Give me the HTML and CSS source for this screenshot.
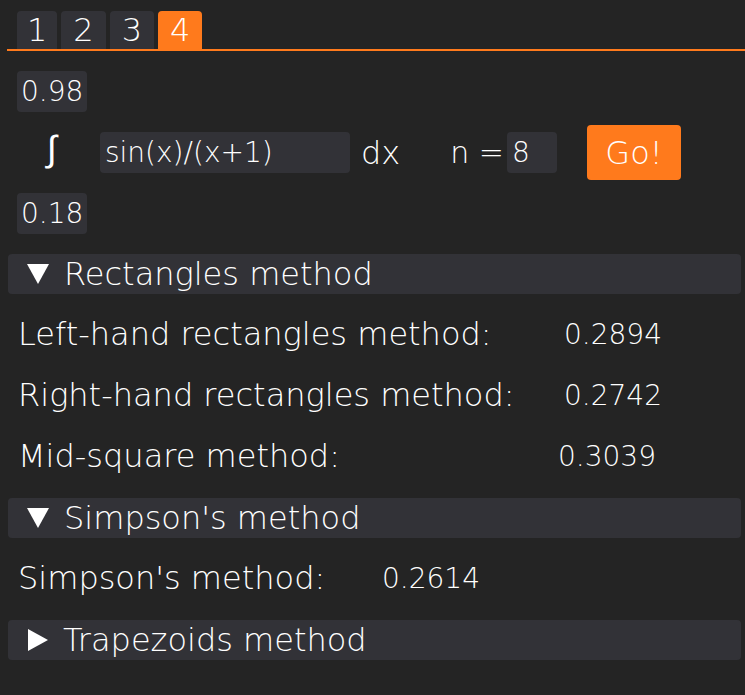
FILE: index.html
```html
<!DOCTYPE html>
<html lang="en">
<head>
    <meta charset="UTF-8">
    <title>Integrals</title>
    <link rel="stylesheet" href="styles.css">
</head>
<body>
    <div class="tabs">
        <button class="tab">1</button>
        <button class="tab">2</button>
        <button class="tab">3</button>
        <button class="tab active">4</button>
    </div>
    <div class="page">
        <div class="limits">
            <input class="field bound" type="text" value="0.98">
            <div class="integral-row">
                <span class="integral">∫</span>
                <input class="field func" type="text" value="sin(x)/(x+1)">
                <span class="dx">dx</span>
                <span class="n-label">n =</span>
                <input class="field steps" type="text" value="8">
                <button class="go">Go!</button>
            </div>
            <input class="field bound" type="text" value="0.18">
        </div>

        <details class="section" open>
            <summary>Rectangles method</summary>
            <div class="results rect-results">
                <span>Left-hand rectangles method:</span><span class="value">0.2894</span>
                <span>Right-hand rectangles method:</span><span class="value">0.2742</span>
                <span>Mid-square method:</span><span class="value mid">0.3039</span>
            </div>
        </details>

        <details class="section" open>
            <summary>Simpson's method</summary>
            <div class="results simpson-results">
                <span>Simpson's method:</span><span class="value">0.2614</span>
            </div>
        </details>

        <details class="section">
            <summary>Trapezoids method</summary>
        </details>
    </div>
</body>
</html>
```

FILE: styles.css
```css
body { margin: 0; background-color: #242424; color: #fff; font-family: "DejaVu Sans", sans-serif; font-weight: 200; font-size: 32px; }

.tabs { display: flex; gap: 4px; margin: 11px 0 0 7px; padding-left: 10px; border-bottom: 2px solid #ff7a1c; }
.tab { height: 38px; padding: 0 12px; border: none; border-radius: 4px 4px 0 0; background-color: #323237; color: #fff; font: inherit; line-height: 38px; }
.tab:first-child { padding: 0 10px; }
.tab.active { background-color: #ff7a1c; }

.page { padding: 0 4px 0 8px; }

.limits { display: flex; flex-direction: column; align-items: flex-start; padding: 20px 0 20px 9px; gap: 14px; }
.field { height: 41px; box-sizing: border-box; padding: 0 5px; border: none; border-radius: 4px; background-color: #323237; color: #fff; font: inherit; font-size: 28px; outline: none; }
.bound { width: 70px; padding: 0 4px; }
.integral-row { display: flex; align-items: center; height: 55px; margin: -1px 0; }
.integral { width: 83px; padding: 0 0 8px 30px; box-sizing: border-box; font-size: 36px; line-height: 1; }
.func { width: 250px; }
.dx { margin-left: 11px; }
.n-label { margin-left: 50px; white-space: nowrap; font-size: 30px; }
.steps { width: 50px; margin-left: 3px; }
.go { height: 55px; width: 94px; margin-left: 30px; border: none; border-radius: 4px; background-color: #ff7a1c; color: #fff; font: inherit; }

.section summary { display: flex; align-items: center; height: 40px; border-radius: 4px; background-color: #323237; list-style: none; cursor: pointer; }
.section summary::-webkit-details-marker { display: none; }
.section summary::before { content: ""; margin: 0 15px 0 20px; border-style: solid; border-color: transparent transparent transparent #fff; border-width: 11.5px 0 11.5px 20px; }
.section[open] summary::before { margin: 0 15px 0 19px; border-color: #fff transparent transparent transparent; border-width: 20px 11.5px 0 11.5px; }

.results { display: grid; grid-template-columns: 546px auto; padding: 10px 0 11px 10px; }
.results span { height: 61px; line-height: 61px; }
.value { font-size: 28px; }
.value.mid { margin-left: -6px; }
.simpson-results { grid-template-columns: 364px auto; }
```
